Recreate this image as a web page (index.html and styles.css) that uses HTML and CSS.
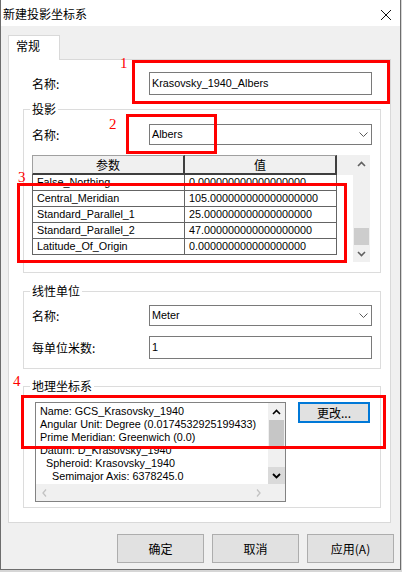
FILE: index.html
```html
<!DOCTYPE html>
<html lang="zh-CN">
<head>
    <meta charset="UTF-8">
    <meta name="viewport" content="width=device-width, initial-scale=1.0">
    <title>新建投影坐标系</title>
    <link rel="stylesheet" href="styles.css">
</head>
<body>
    <div class="window">
        <div class="titlebar">
            <span class="title">新建投影坐标系</span>
            <svg class="close" width="10" height="10" viewBox="0 0 10 10"><path d="M0 0L10 10M10 0L0 10" stroke="#111" stroke-width="1" fill="none"/></svg>
        </div>

        <div class="client">
            <div class="tabs">
                <div class="tab">常规</div>
            </div>

            <div class="panel">
                <div class="form-row">
                    <span class="label">名称:</span>
                    <div class="field">Krasovsky_1940_Albers</div>
                </div>

                <fieldset class="group group-proj">
                    <legend>投影</legend>
                    <div class="form-row">
                        <span class="label">名称:</span>
                        <div class="field select">
                            <span>Albers</span>
                            <svg width="9" height="5" viewBox="0 0 9 5"><path d="M0.5 0.5L4.5 4.5L8.5 0.5" fill="none" stroke="#5a5a5a"/></svg>
                        </div>
                    </div>

                    <div class="param-list">
                        <div class="param-view">
                            <div class="param-head">
                                <span>参数</span>
                                <span>值</span>
                            </div>
                            <div class="param-row"><span>False_Northing</span><span>0.000000000000000000</span></div>
                            <div class="param-row"><span>Central_Meridian</span><span>105.000000000000000000</span></div>
                            <div class="param-row"><span>Standard_Parallel_1</span><span>25.000000000000000000</span></div>
                            <div class="param-row"><span>Standard_Parallel_2</span><span>47.000000000000000000</span></div>
                            <div class="param-row"><span>Latitude_Of_Origin</span><span>0.000000000000000000</span></div>
                        </div>
                        <div class="vscroll">
                            <div class="arrow">
                                <svg width="9" height="6" viewBox="0 0 9 6"><path d="M1 5L4.5 1.5L8 5" fill="none" stroke="#606060" stroke-width="1.6"/></svg>
                            </div>
                            <div class="track">
                                <div class="thumb" style="margin-top: 56px; height: 17px;"></div>
                            </div>
                            <div class="arrow">
                                <svg width="9" height="6" viewBox="0 0 9 6"><path d="M1 1L4.5 4.5L8 1" fill="none" stroke="#606060" stroke-width="1.6"/></svg>
                            </div>
                        </div>
                    </div>
                </fieldset>

                <fieldset class="group group-unit">
                    <legend>线性单位</legend>
                    <div class="form-row">
                        <span class="label">名称:</span>
                        <div class="field select">
                            <span>Meter</span>
                            <svg width="9" height="5" viewBox="0 0 9 5"><path d="M0.5 0.5L4.5 4.5L8.5 0.5" fill="none" stroke="#5a5a5a"/></svg>
                        </div>
                    </div>
                    <div class="form-row">
                        <span class="label">每单位米数:</span>
                        <div class="field">1</div>
                    </div>
                </fieldset>

                <fieldset class="group group-geo">
                    <legend>地理坐标系</legend>
                    <div class="geo-row">
                        <div class="geo-box">
<div class="geo-text">Name: GCS_Krasovsky_1940
Angular Unit: Degree (0.0174532925199433)
Prime Meridian: Greenwich (0.0)
Datum: D_Krasovsky_1940
  Spheroid: Krasovsky_1940
    Semimajor Axis: 6378245.0</div>
                            <div class="geo-vscroll">
                                <div class="arrow">
                                    <svg width="9" height="6" viewBox="0 0 9 6"><path d="M1 5L4.5 1.5L8 5" fill="none" stroke="#000" stroke-width="1.6"/></svg>
                                </div>
                                <div class="thumb" style="height: 28px;"></div>
                                <div class="arrow arrow-hot">
                                    <svg width="9" height="6" viewBox="0 0 9 6"><path d="M1 1L4.5 4.5L8 1" fill="none" stroke="#000" stroke-width="1.8"/></svg>
                                </div>
                            </div>
                            <div class="geo-hscroll">
                                <svg width="5" height="8" viewBox="0 0 5 8"><path d="M4 0.5L1 4L4 7.5" fill="none" stroke="#c2c2c2" stroke-width="1.3"/></svg>
                                <svg width="5" height="8" viewBox="0 0 5 8"><path d="M1 0.5L4 4L1 7.5" fill="none" stroke="#c2c2c2" stroke-width="1.3"/></svg>
                            </div>
                            <div class="geo-corner"></div>
                        </div>
                        <button type="button" class="btn btn-change">更改...</button>
                    </div>
                </fieldset>
            </div>

            <div class="buttons">
                <button type="button" class="btn">确定</button>
                <button type="button" class="btn">取消</button>
                <button type="button" class="btn">应用(A)</button>
            </div>
        </div>
    </div>

    <!-- annotation boxes drawn over the dialog -->
    <div class="mark mark-1"></div>
    <div class="mark mark-2"></div>
    <div class="mark mark-3"></div>
    <div class="mark mark-4"></div>
    <span class="mark-num num-1">1</span>
    <span class="mark-num num-2">2</span>
    <span class="mark-num num-3">3</span>
    <span class="mark-num num-4">4</span>
</body>
</html>
```

FILE: styles.css
```css
* {
    margin: 0;
    padding: 0;
    box-sizing: border-box;
}

body {
    font-family: "Noto Sans CJK SC", "Liberation Sans", sans-serif;
    font-size: 12px;
    line-height: 16px;
    color: #000;
    background: #d6d6d6;
}

.window {
    width: 401px;
    height: 570px;
    background: #f0f0f0;
    border: 1px solid #6d6d6d;
    border-top: none;
    display: flex;
    flex-direction: column;
}

.titlebar {
    flex: none;
    height: 26px;
    background: #fff;
    display: flex;
    align-items: center;
    justify-content: space-between;
    padding: 2px 9px 0 2px;
}

.close {
    margin-top: 1px;
}

.client {
    padding: 9px 0 0 7px;
}

.tabs {
    display: flex;
    height: 24px;
}

.tab {
    width: 52px;
    height: 25px;
    background: #fff;
    border: 1px solid #d9d9d9;
    border-bottom: none;
    padding-left: 7px;
    line-height: 20px;
    position: relative;
    z-index: 1;
}

.panel {
    width: 383px;
    background: #fff;
    border: 1px solid #d9d9d9;
    padding: 12px 9px 14px 14px;
}

.form-row {
    display: grid;
    grid-template-columns: 117px 223px;
    align-items: center;
}

.panel > .form-row {
    margin-left: 9px;
}

.field {
    height: 23px;
    border: 1px solid #7a7a7a;
    padding-left: 2px;
    font-family: "Liberation Sans", sans-serif;
    font-size: 10.8px;
    line-height: 21px;
    background: #fff;
}

.select {
    height: 21px;
    line-height: 19px;
    display: flex;
    align-items: center;
    justify-content: space-between;
    padding-right: 3px;
}

.group {
    width: 358px;
    border: 1px solid #dcdcdc;
}

.group legend {
    padding: 0 2px;
    margin-left: -2px;
    line-height: 16px;
}

.group-proj {
    margin-top: 6px;
    padding: 7px 8px 10px 8px;
}

.group-unit {
    margin-top: 10px;
    padding: 6px 8px 9px 8px;
}

.group-unit .form-row + .form-row {
    margin-top: 10px;
}

.group-geo {
    margin-top: 9px;
    padding: 8px 8px 5px 8px;
}

/* parameter list */
.param-list {
    display: flex;
    height: 107px;
    margin-top: 10px;
}

.param-view {
    width: 321px;
}

.param-head {
    display: grid;
    grid-template-columns: 153px 152px;
    height: 20px;
    background: #f0f0f0;
}

.param-head span {
    text-align: center;
    line-height: 17px;
    border-top: 1px solid #a0a0a0;
    border-right: 2px solid #3f3f3f;
    border-bottom: 2px solid #3f3f3f;
}

.param-head span:first-child {
    border-left: 1px solid #a0a0a0;
}

.param-row {
    display: grid;
    grid-template-columns: 153px 152px;
    height: 16px;
}

.param-row span {
    padding-left: 4px;
    font-family: "Liberation Sans", sans-serif;
    font-size: 10.8px;
    line-height: 15px;
    white-space: nowrap;
    overflow: hidden;
    border-right: 1px solid #646464;
    border-bottom: 1px solid #646464;
}

.param-row span:first-child {
    border-left: 1px solid #646464;
}

.vscroll {
    width: 17px;
    background: #f0f0f0;
    display: flex;
    flex-direction: column;
}

.arrow {
    flex: none;
    height: 17px;
    display: flex;
    align-items: center;
    justify-content: center;
}

.track {
    flex: 1;
}

.thumb {
    width: 15px;
    margin-left: 1px;
    background: #cdcdcd;
}

/* geographic coordinate system */
.geo-row {
    display: flex;
    align-items: flex-start;
    gap: 12px;
    padding-left: 3px;
}

.geo-box {
    width: 251px;
    height: 100px;
    border: 1px solid #828282;
    background: #fff;
    display: grid;
    grid-template-columns: 232px 17px;
    grid-template-rows: 81px 17px;
}

.geo-text {
    overflow: hidden;
    padding: 2px 0 0 4px;
    font-family: "Liberation Sans", sans-serif;
    font-size: 10.8px;
    line-height: 13px;
    white-space: pre;
}

.geo-vscroll {
    background: #f0f0f0;
    display: flex;
    flex-direction: column;
}

.geo-vscroll .thumb {
    background: #c6c6c6;
}

.arrow-hot {
    margin-top: auto;
    background: #dadada;
}

.geo-hscroll {
    background: #f0f0f0;
    display: flex;
    align-items: center;
    justify-content: space-between;
    padding: 0 7px 0 6px;
}

.geo-corner {
    background: #f0f0f0;
}

/* buttons */
.btn {
    width: 87px;
    height: 29px;
    border: 1px solid #adadad;
    background: #e1e1e1;
    font-family: "Noto Sans CJK SC", "Liberation Sans", sans-serif;
    font-size: 12px;
    line-height: 16px;
    color: #000;
}

.btn-change {
    width: 72px;
    height: 21px;
    border: 2px solid #0078d7;
}

.buttons {
    display: flex;
    justify-content: flex-end;
    gap: 8px;
    margin-top: 11px;
    padding-right: 6px;
}

/* red annotation marks */
.mark {
    position: absolute;
    border: 3px solid #ff0000;
}

.mark-1 { left: 132px; top: 60px; width: 258px; height: 44px; }
.mark-2 { left: 126px; top: 114px; width: 91px; height: 40px; }
.mark-3 { left: 17px; top: 183px; width: 330px; height: 80px; }
.mark-4 { left: 21px; top: 395px; width: 365px; height: 54px; }

.mark-num {
    position: absolute;
    font-family: "Liberation Serif", serif;
    font-size: 15px;
    line-height: 15px;
    color: #ff0000;
}

.num-1 { left: 120px; top: 56px; }
.num-2 { left: 109px; top: 117px; }
.num-3 { left: 18px; top: 170px; }
.num-4 { left: 13px; top: 374px; }
```
